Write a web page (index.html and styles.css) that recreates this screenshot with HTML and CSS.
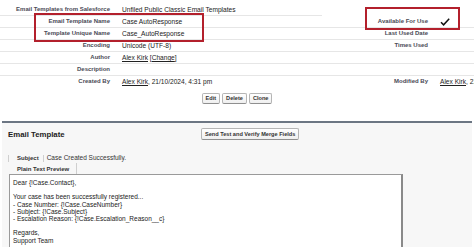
FILE: index.html
```html
<!DOCTYPE html>
<html lang="en">
<head>
    <meta charset="UTF-8">
    <title>Email Template - Case AutoResponse</title>
    <link rel="stylesheet" href="styles.css">
</head>
<body>

    <!-- Detail list -->
    <div class="detail">
        <div class="grid">
            <div class="cell label">Email Templates from Salesforce</div>
            <div class="cell value">Unfiled Public Classic Email Templates</div>
            <div class="cell none"></div>
            <div class="cell none"></div>

            <div class="cell label">Email Template Name</div>
            <div class="cell value">Case AutoResponse</div>
            <div class="cell label">Available For Use</div>
            <div class="cell value">
                <svg class="check" width="10" height="8" viewBox="0 0 10 8"><path d="M1 4.2 L3.6 6.8 L9.2 0.8" fill="none" stroke="#111" stroke-width="1.5"/></svg>
            </div>

            <div class="cell label">Template Unique Name</div>
            <div class="cell value">Case_AutoResponse</div>
            <div class="cell label">Last Used Date</div>
            <div class="cell value"></div>

            <div class="cell label">Encoding</div>
            <div class="cell value">Unicode (UTF-8)</div>
            <div class="cell label">Times Used</div>
            <div class="cell value"></div>

            <div class="cell label">Author</div>
            <div class="cell value"><a href="#">Alex Kirk</a> [<a href="#">Change</a>]</div>
            <div class="cell label"></div>
            <div class="cell value"></div>

            <div class="cell label">Description</div>
            <div class="cell value"></div>
            <div class="cell label"></div>
            <div class="cell value"></div>

            <div class="cell label none">Created By</div>
            <div class="cell value none"><a href="#">Alex Kirk</a>, 21/10/2024, 4:31 pm</div>
            <div class="cell label none">Modified By</div>
            <div class="cell value none"><a href="#">Alex Kirk</a>, 21/10/2024, 4:31 pm</div>
        </div>

        <div class="actions">
            <button type="button" class="btn">Edit</button>
            <button type="button" class="btn">Delete</button>
            <button type="button" class="btn">Clone</button>
        </div>

        <!-- highlight boxes -->
        <div class="mark mark-left"></div>
        <div class="mark mark-right"></div>
    </div>

    <!-- Email Template section -->
    <div class="panel">
        <div class="panel-head">
            <h2 class="panel-title">Email Template</h2>
            <button type="button" class="btn">Send Test and Verify Merge Fields</button>
        </div>

        <div class="subject">
            <span class="sub-label">Subject</span><span class="sub-value">Case Created Successfully.</span>
        </div>

        <div class="tab">Plain Text Preview</div>
        <div class="preview">Dear {!Case.Contact},

Your case has been successfully registered...
- Case Number: {!Case.CaseNumber}
- Subject: {!Case.Subject}
- Escalation Reason: {!Case.Escalation_Reason__c}

Regards,
Support Team</div>
    </div>

</body>
</html>
```

FILE: styles.css
```css
/* Halaman dasar */
body {
    margin: 0;
    width: 474px;
    height: 248px;
    overflow: hidden;
    background: #fff;
    font-family: "Liberation Sans", Arial, sans-serif;
    color: #222;
}

/* Detail list */
.detail {
    position: relative;
    padding-top: 4px;
}

.grid {
    display: grid;
    grid-template-columns: 116px 206px 112px minmax(0, 1fr);
}

.cell {
    height: 12px;
    line-height: 11px;
    border-bottom: 1px solid #e6e6e6;
    box-sizing: border-box;
    white-space: nowrap;
    overflow: hidden;
}

.cell.none {
    border-bottom: none;
}

.label {
    text-align: right;
    padding-right: 6px;
    font-size: 6px;
    font-weight: bold;
    color: #4a4a56;
}

.value {
    padding-left: 6px;
    font-size: 6.6px;
    color: #222;
}

.value a {
    color: #222;
    text-decoration: underline;
}

.check {
    vertical-align: middle;
}

/* Tombol */
.actions {
    display: flex;
    justify-content: center;
    gap: 2px;
    margin-top: 5px;
}

.btn {
    height: 11px;
    padding: 0 3px;
    border: 1px solid #b5b5b5;
    border-bottom-color: #8f8f8f;
    border-radius: 2px;
    background: linear-gradient(#ffffff, #efefef);
    font-family: "Liberation Sans", Arial, sans-serif;
    font-size: 5.6px;
    font-weight: bold;
    color: #333;
    line-height: 9px;
}

/* Kotak merah penanda */
.mark {
    position: absolute;
    border: 2px solid #b3202c;
    box-sizing: border-box;
}

.mark-left {
    left: 34px;
    top: 13px;
    width: 170px;
    height: 29px;
}

.mark-right {
    left: 365px;
    top: 7px;
    width: 95px;
    height: 23px;
}

/* Panel Email Template */
.panel {
    margin: 17px 2px 0;
    height: 124px;
    border-top: 2px solid #6c7683;
    background: #f7f7f7;
}

.panel-head {
    display: flex;
    align-items: center;
    height: 22px;
    padding-left: 6px;
}

.panel-title {
    width: 193px;
    margin: 0;
    font-size: 7.8px;
    font-weight: bold;
    color: #222;
}

.panel-head .btn {
    height: 12px;
}

.subject {
    margin-top: 4px;
    height: 12px;
    line-height: 12px;
    padding-left: 6px;
}

.sub-label {
    display: inline-block;
    line-height: 7px;
    padding: 0 4px 0 8px;
    border-left: 1px solid #cfcfcf;
    border-right: 1px solid #cfcfcf;
    font-size: 6px;
    font-weight: bold;
    color: #333;
}

.sub-value {
    padding-left: 3px;
    font-size: 6.5px;
    color: #333;
}

.tab {
    width: fit-content;
    margin: 2px 0 0 7px;
    height: 11px;
    line-height: 12px;
    padding: 0 7px 0 8px;
    border-right: 1px solid #cfcfcf;
    font-size: 6px;
    font-weight: bold;
    color: #333;
}

.preview {
    width: 394px;
    height: 73px;
    margin-left: 7px;
    padding: 4px 3px 0;
    box-sizing: border-box;
    overflow: hidden;
    border: 1px solid #9a9a9a;
    border-right: 2px solid #8a8a8a;
    border-bottom: none;
    background: #fff;
    white-space: pre;
    font-size: 6.5px;
    line-height: 7.2px;
    color: #222;
}
```
